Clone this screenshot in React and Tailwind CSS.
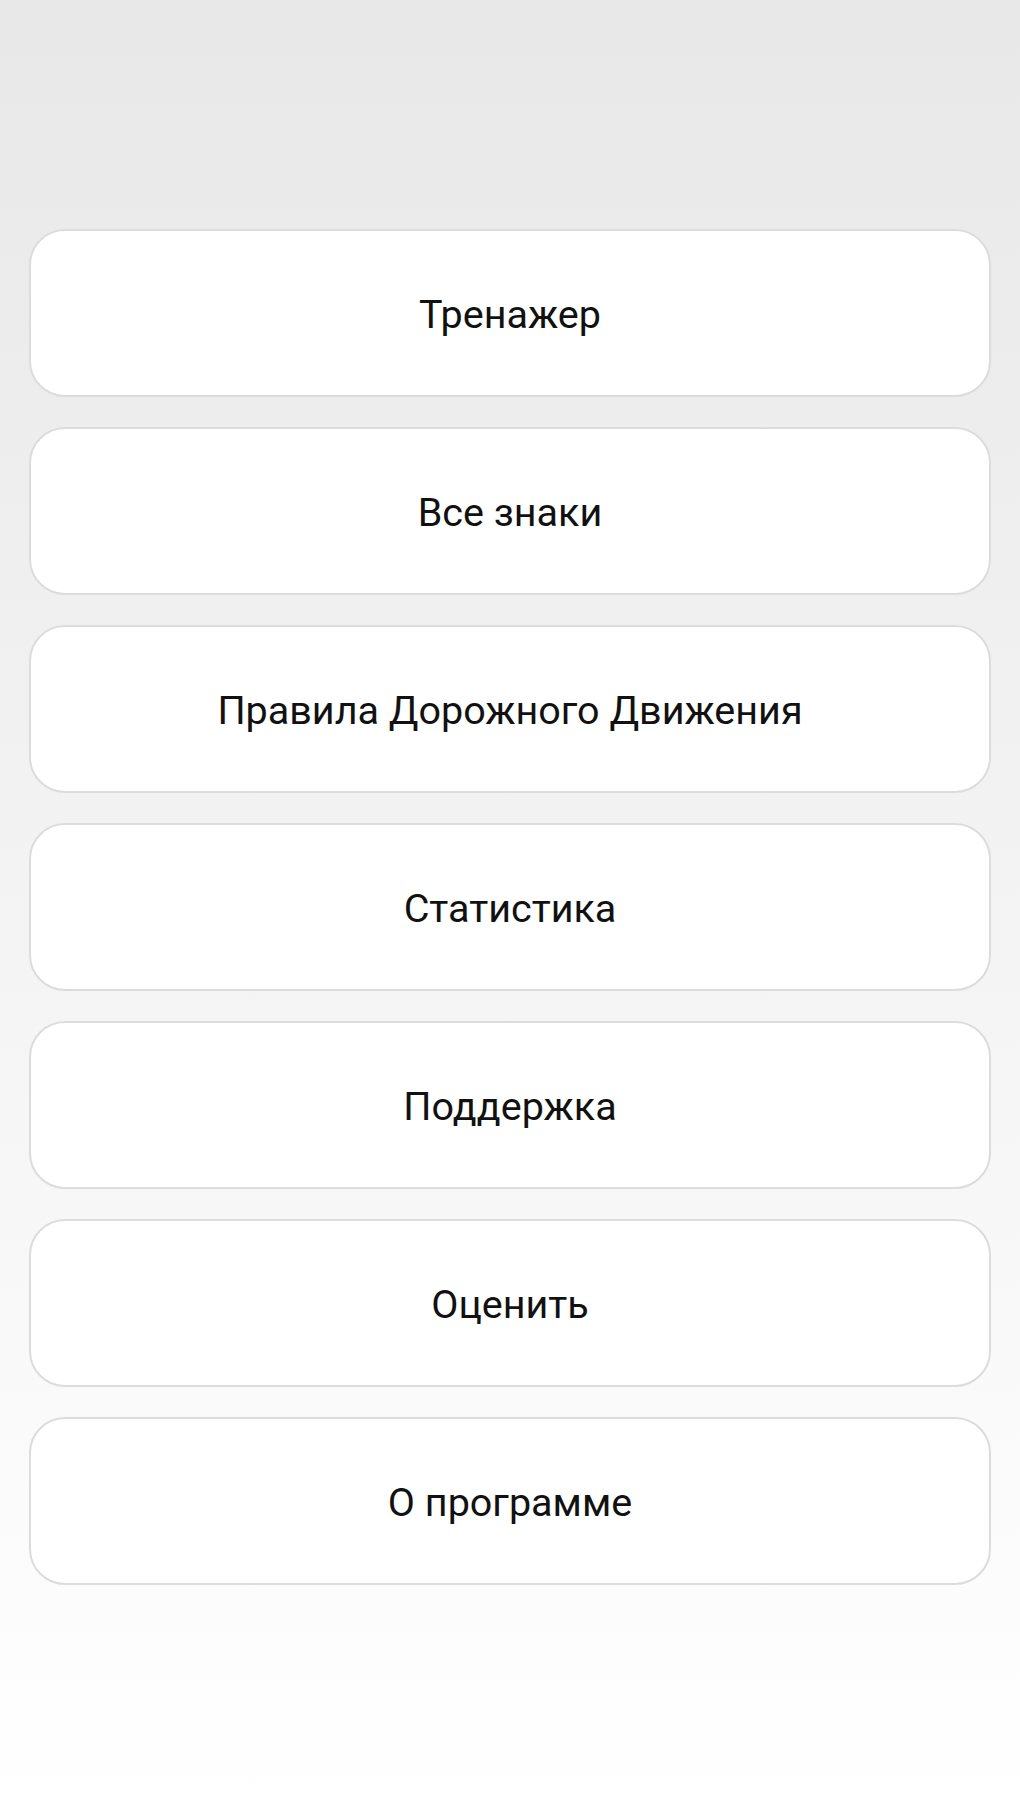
import React from 'react';

const items = [
  'Тренажер',
  'Все знаки',
  'Правила Дорожного Движения',
  'Статистика',
  'Поддержка',
  'Оценить',
  'О программе',
];

export default function App() {
  return (
    <div className="min-h-[1813px] w-full bg-gradient-to-b from-[#e8e8e8] to-[#ffffff] pt-[229px] px-[29px]" style={{ fontFamily: 'Roboto, "Noto Sans", sans-serif' }}>
      <div className="flex flex-col gap-[30px]">
        {items.map((label) => (
          <button
            key={label}
            type="button"
            className="h-[168px] w-full rounded-[36px] border-2 border-[#dcdcdc] bg-white pt-[4px] text-[39.5px] text-[#111] flex items-center justify-center"
          >
            {label}
          </button>
        ))}
      </div>
    </div>
  );
}
